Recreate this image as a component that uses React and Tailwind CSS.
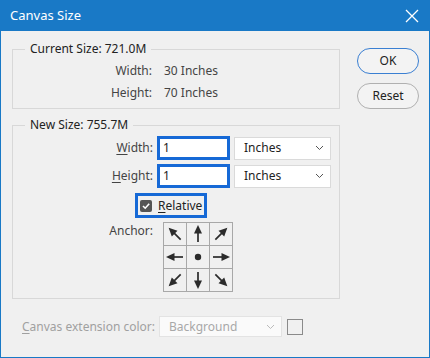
import React from "react";

const font = { fontFamily: '"Noto Sans", "Open Sans", sans-serif' };

function Arrow({ angle }) {
  return (
    <svg width="22" height="22" viewBox="0 0 22 22">
      <g transform={`rotate(${angle} 11 11)`}>
        <line x1="11" y1="19" x2="11" y2="8" stroke="#2b2b2b" strokeWidth="1.7" />
        <polygon points="11,2 7,10.5 15,10.5" fill="#2b2b2b" />
      </g>
    </svg>
  );
}

function Dot() {
  return (
    <svg width="22" height="22" viewBox="0 0 22 22">
      <circle cx="11" cy="11" r="3.2" fill="#2b2b2b" />
    </svg>
  );
}

function Chevron({ color = "#555" }) {
  return (
    <svg width="9" height="6" viewBox="0 0 9 6">
      <path d="M1 1 L4.5 4.5 L8 1" fill="none" stroke={color} strokeWidth="1" />
    </svg>
  );
}

export default function App() {
  const cells = [-45, 0, 45, -90, null, 90, -135, 180, 135];
  return (
    <div
      className="w-[430px] h-[358px] flex flex-col bg-[#f0f0f0] border-x border-b border-[#1979c6] text-[12px] text-[#1a1a1a]"
      style={font}
    >
      <div className="h-[31px] shrink-0 bg-[#1979c6] flex items-center justify-between pl-[9px] pr-[9px] text-white text-[13px]">
        <span className="leading-none">Canvas Size</span>
        <svg width="14" height="14" viewBox="0 0 14 14" className="mr-[1px]">
          <path d="M1 1 L13 13 M13 1 L1 13" stroke="white" strokeWidth="1.3" />
        </svg>
      </div>
      <div className="flex flex-1">
        <div className="flex flex-col ml-[11px] w-[328px]">
          <fieldset className="mt-[10px] border border-[#d8d8d8] h-[68px]">
            <legend className="ml-[12px] px-[5px] leading-[16px] text-[#222]">Current Size: 721.0M</legend>
            <div className="flex flex-col pt-[3px]">
              <div className="flex h-[22px] items-center">
                <span className="w-[139px] text-right text-[#444]">Width:</span>
                <span className="ml-[12px] text-[#444]">30 Inches</span>
              </div>
              <div className="flex h-[22px] items-center">
                <span className="w-[139px] text-right text-[#444]">Height:</span>
                <span className="ml-[12px] text-[#444]">70 Inches</span>
              </div>
            </div>
          </fieldset>
          <fieldset className="mt-[8px] border border-[#d8d8d8] h-[182px]">
            <legend className="ml-[12px] px-[5px] leading-[16px] text-[#222]">New Size: 755.7M</legend>
            <div className="flex flex-col pt-[3px]">
              <div className="flex items-center h-[24px]">
                <span className="w-[140px] text-right text-[#444]">
                  <span className="underline underline-offset-2">W</span>idth:
                </span>
                <div className="ml-[4px] w-[73px] h-[24px] border-[3px] border-[#1669d6] bg-white flex items-center pl-[3px] text-[#222]">1</div>
                <div className="ml-[4px] w-[97px] h-[23px] border border-[#dadada] bg-white flex items-center justify-between pl-[9px] pr-[6px] text-[#222]">
                  <span>Inches</span>
                  <Chevron />
                </div>
              </div>
              <div className="flex items-center h-[24px] mt-[4px]">
                <span className="w-[140px] text-right text-[#444]">
                  <span className="underline underline-offset-2">H</span>eight:
                </span>
                <div className="ml-[4px] w-[73px] h-[24px] border-[3px] border-[#1669d6] bg-white flex items-center pl-[3px] text-[#222]">1</div>
                <div className="ml-[4px] w-[97px] h-[23px] border border-[#dadada] bg-white flex items-center justify-between pl-[9px] pr-[6px] text-[#222]">
                  <span>Inches</span>
                  <Chevron />
                </div>
              </div>
              <div className="flex h-[25px] mt-[5px] pl-[122px]">
                <div className="w-[72px] h-[25px] border-[3px] border-[#1669d6] flex items-center pl-[2px] gap-[6px]">
                  <div className="w-[12px] h-[12px] rounded-[2px] bg-[#555] flex items-center justify-center">
                    <svg width="10" height="10" viewBox="0 0 10 10">
                      <path d="M2 5 L4.2 7.2 L8.2 2.8" fill="none" stroke="white" strokeWidth="1.6" />
                    </svg>
                  </div>
                  <span className="text-[#222]">
                    <span className="underline underline-offset-2">R</span>elative
                  </span>
                </div>
              </div>
              <div className="flex mt-[4px]">
                <span className="w-[140px] text-right text-[#444] leading-[16px] pt-[1px]">Anchor:</span>
                <div className="ml-[10px] grid grid-cols-3 gap-px bg-[#a8a8a8] p-px w-[70px] h-[70px]">
                  {cells.map((a, i) => (
                    <div key={i} className="bg-[#f0f0f0] flex items-center justify-center">
                      {a === null ? <Dot /> : <Arrow angle={a} />}
                    </div>
                  ))}
                </div>
              </div>
            </div>
          </fieldset>
          <div className="flex items-center mt-[17px] ml-[10px]">
            <span className="text-[#a0a0a0]">
              <span className="underline underline-offset-2">C</span>anvas extension color:
            </span>
            <div className="ml-[4px] w-[123px] h-[21px] border border-[#e3e3e3] bg-[#fafafa] flex items-center justify-between pl-[9px] pr-[6px] text-[#a8a8a8]">
              <span>Background</span>
              <Chevron color="#bbb" />
            </div>
            <div className="ml-[5px] w-[16px] h-[16px] border border-[#8a8a8a]"></div>
          </div>
        </div>
        <div className="flex flex-col ml-[17px] mt-[17px] gap-[9px]">
          <div className="w-[62px] h-[26px] rounded-full border border-[#3a7fd2] bg-[#f3f3f3] flex items-center justify-center text-[#222]">OK</div>
          <div className="w-[62px] h-[26px] rounded-full border border-[#b0b0b0] bg-[#f3f3f3] flex items-center justify-center text-[#222]">Reset</div>
        </div>
      </div>
    </div>
  );
}
